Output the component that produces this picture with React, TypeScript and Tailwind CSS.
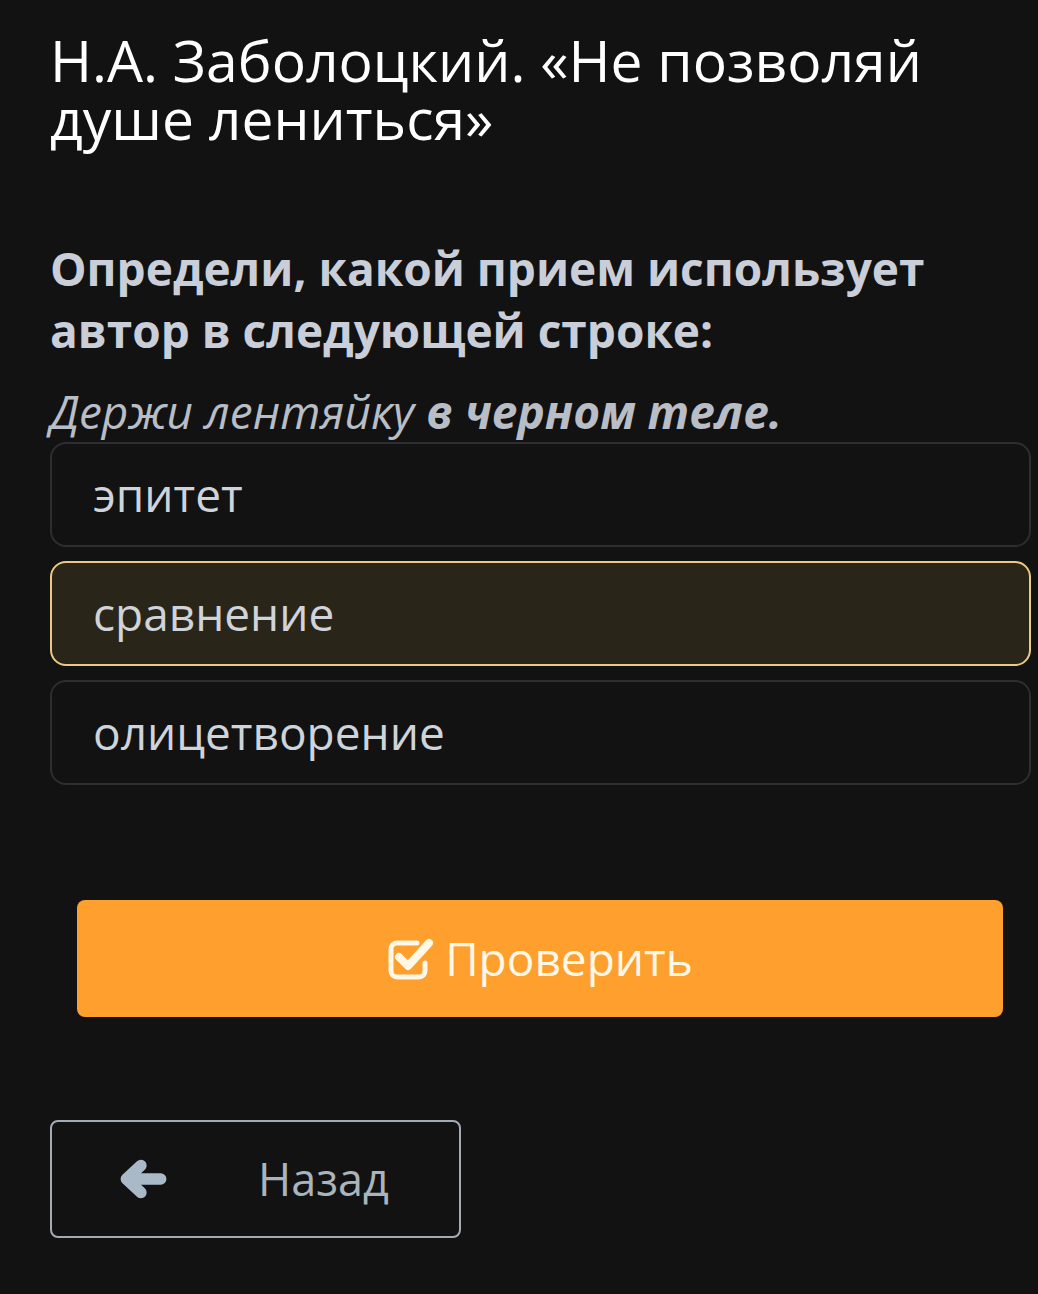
const options = ['эпитет', 'сравнение', 'олицетворение']

function CheckIcon() {
  return (
    <svg width="48" height="44" viewBox="0 0 48 44" fill="none">
      <path
        d="M30 6H10a6 6 0 0 0-6 6v22a6 6 0 0 0 6 6h22a6 6 0 0 0 6-6v-8"
        stroke="currentColor"
        strokeWidth="5"
        strokeLinecap="round"
      />
      <path
        d="M12 20l9 9L42 6"
        stroke="currentColor"
        strokeWidth="8"
        strokeLinecap="round"
        strokeLinejoin="round"
      />
    </svg>
  )
}

function BackArrow() {
  return (
    <svg width="50" height="42" viewBox="0 0 48 40" fill="none">
      <path
        d="M22 7L8 20l14 13M10 20h31"
        stroke="currentColor"
        strokeWidth="11"
        strokeLinecap="round"
        strokeLinejoin="round"
      />
    </svg>
  )
}

export default function App() {
  return (
    <div
      className="min-h-[1294px] w-[1038px] bg-[#121212] text-[#c9ced8]"
      style={{ fontFamily: '"Open Sans", "Noto Sans", sans-serif' }}
    >
      <div className="px-[50px] pt-[31px]">
        <h1 className="text-[57px] leading-[58px] text-white">
          Н.А. Заболоцкий. «Не позволяй душе лениться»
        </h1>

        <p className="mt-[90px] text-[46px] font-bold leading-[62px] text-[#c9ced8]">
          Определи, какой прием использует автор в следующей строке:
        </p>
        <p className="mt-[25px] text-[46px] italic leading-[50px] text-[#b8bdc6]">
          Держи лентяйку <b className="font-bold">в черном теле.</b>
        </p>

        <div className="mt-[6px] flex w-[981px] flex-col gap-[14px]">
          {options.map((o, i) => (
            <div
              key={o}
              className={
                i === 1
                  ? 'flex h-[105px] items-center rounded-[16px] border-2 border-[#e9c985] bg-[#2a2519] px-[41px] text-[46px] text-[#cfd3da]'
                  : 'flex h-[105px] items-center rounded-[16px] border-2 border-[#2c2e31] bg-[#121212] px-[41px] text-[46px] text-[#cfd3da]'
              }
            >
              {o}
            </div>
          ))}
        </div>

        <button className="ml-[27px] mt-[115px] flex h-[117px] w-[926px] items-center justify-center gap-[10px] rounded-[8px] bg-[#ff9f2e] text-[46px] text-[#fff8e6]">
          <CheckIcon />
          Проверить
        </button>

        <button className="mt-[103px] flex h-[118px] w-[411px] items-center rounded-[8px] border-2 border-[#a3acb5] text-[45px] text-[#a9b4be]">
          <span className="ml-[66px] text-[#a9b9c7]">
            <BackArrow />
          </span>
          <span className="ml-[90px]">Назад</span>
        </button>
      </div>
    </div>
  )
}
